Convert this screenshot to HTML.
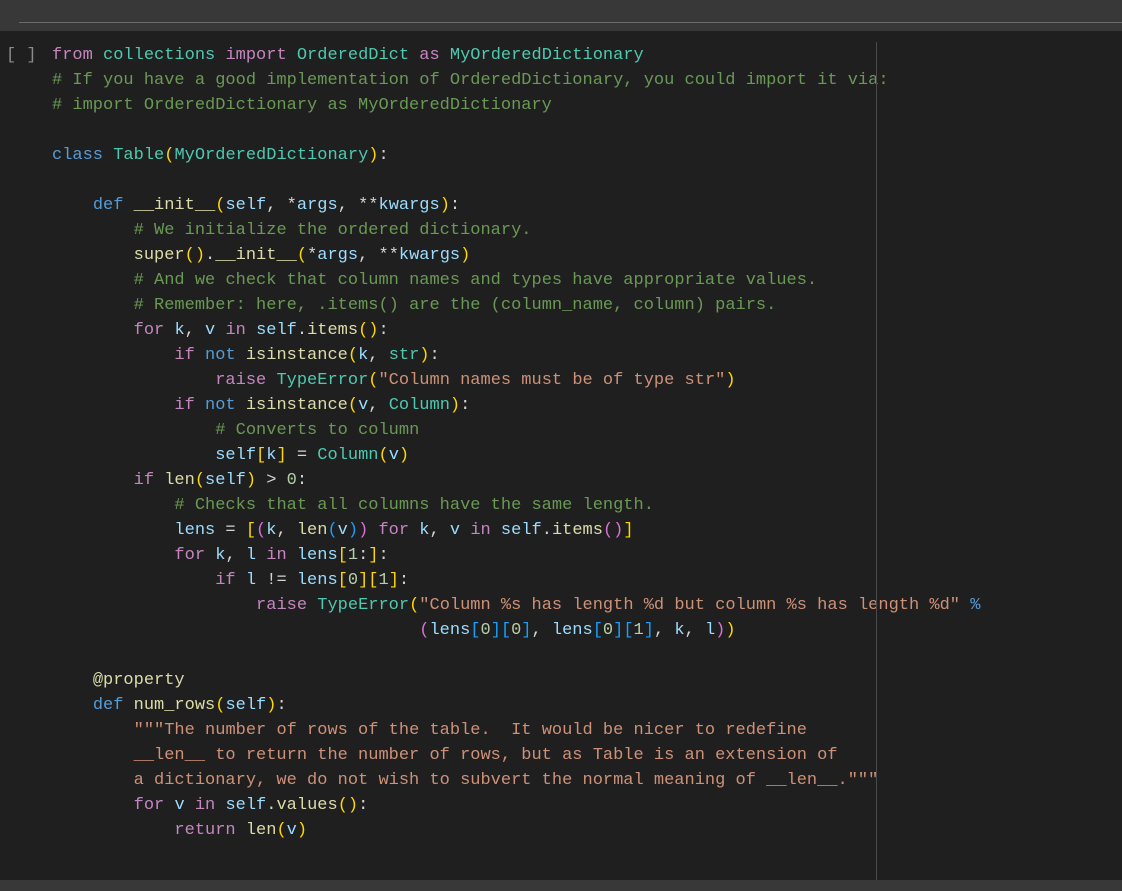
<!DOCTYPE html>
<html><head><meta charset="utf-8"><style>
body{margin:0;width:1122px;height:891px;background:#1f1f1f;overflow:hidden;position:relative;font-family:"Liberation Mono",monospace}
.top{position:absolute;left:0;top:0;width:1122px;height:31px;background:#383838}
.top i{position:absolute;left:19px;right:0;top:22px;height:1px;background:#6b6b6b}
.bot{position:absolute;left:0;bottom:0;width:1122px;height:11px;background:#383838}
.rule{position:absolute;left:876px;top:42px;width:1px;height:838px;background:#4a4a4a}
.br{position:absolute;left:6px;top:43px;color:#8b8b8b;font-size:17px;line-height:25px}
pre{position:absolute;left:52px;top:43px;margin:0;font-size:17px;line-height:25px;color:#d4d4d4;font-family:"Liberation Mono",monospace}
.k{color:#569cd6}.c{color:#c586c0}.f{color:#dcdcaa}.t{color:#4ec9b0}.s{color:#ce9178}.m{color:#6a9955}.v{color:#9cdcfe}.n{color:#b5cea8}.y{color:#ffd700}.p{color:#da70d6}.b{color:#179fff}
</style></head><body>
<div class="top"><i></i></div>
<div class="br">[ ]</div>
<pre><span class="c">from</span> <span class="t">collections</span> <span class="c">import</span> <span class="t">OrderedDict</span> <span class="c">as</span> <span class="t">MyOrderedDictionary</span>
<span class="m"># If you have a good implementation of OrderedDictionary, you could import it via:</span>
<span class="m"># import OrderedDictionary as MyOrderedDictionary</span>

<span class="k">class</span> <span class="t">Table</span><span class="y">(</span><span class="t">MyOrderedDictionary</span><span class="y">)</span>:

    <span class="k">def</span> <span class="f">__init__</span><span class="y">(</span><span class="v">self</span>, *<span class="v">args</span>, **<span class="v">kwargs</span><span class="y">)</span>:
        <span class="m"># We initialize the ordered dictionary.</span>
        <span class="f">super</span><span class="y">()</span>.<span class="f">__init__</span><span class="y">(</span>*<span class="v">args</span>, **<span class="v">kwargs</span><span class="y">)</span>
        <span class="m"># And we check that column names and types have appropriate values.</span>
        <span class="m"># Remember: here, .items() are the (column_name, column) pairs.</span>
        <span class="c">for</span> <span class="v">k</span>, <span class="v">v</span> <span class="c">in</span> <span class="v">self</span>.<span class="f">items</span><span class="y">()</span>:
            <span class="c">if</span> <span class="k">not</span> <span class="f">isinstance</span><span class="y">(</span><span class="v">k</span>, <span class="t">str</span><span class="y">)</span>:
                <span class="c">raise</span> <span class="t">TypeError</span><span class="y">(</span><span class="s">"Column names must be of type str"</span><span class="y">)</span>
            <span class="c">if</span> <span class="k">not</span> <span class="f">isinstance</span><span class="y">(</span><span class="v">v</span>, <span class="t">Column</span><span class="y">)</span>:
                <span class="m"># Converts to column</span>
                <span class="v">self</span><span class="y">[</span><span class="v">k</span><span class="y">]</span> = <span class="t">Column</span><span class="y">(</span><span class="v">v</span><span class="y">)</span>
        <span class="c">if</span> <span class="f">len</span><span class="y">(</span><span class="v">self</span><span class="y">)</span> &gt; <span class="n">0</span>:
            <span class="m"># Checks that all columns have the same length.</span>
            <span class="v">lens</span> = <span class="y">[</span><span class="p">(</span><span class="v">k</span>, <span class="f">len</span><span class="b">(</span><span class="v">v</span><span class="b">)</span><span class="p">)</span> <span class="c">for</span> <span class="v">k</span>, <span class="v">v</span> <span class="c">in</span> <span class="v">self</span>.<span class="f">items</span><span class="p">()</span><span class="y">]</span>
            <span class="c">for</span> <span class="v">k</span>, <span class="v">l</span> <span class="c">in</span> <span class="v">lens</span><span class="y">[</span><span class="n">1</span>:<span class="y">]</span>:
                <span class="c">if</span> <span class="v">l</span> != <span class="v">lens</span><span class="y">[</span><span class="n">0</span><span class="y">][</span><span class="n">1</span><span class="y">]</span>:
                    <span class="c">raise</span> <span class="t">TypeError</span><span class="y">(</span><span class="s">"Column %s has length %d but column %s has length %d"</span> <span class="k">%</span>
                                    <span class="p">(</span><span class="v">lens</span><span class="b">[</span><span class="n">0</span><span class="b">][</span><span class="n">0</span><span class="b">]</span>, <span class="v">lens</span><span class="b">[</span><span class="n">0</span><span class="b">][</span><span class="n">1</span><span class="b">]</span>, <span class="v">k</span>, <span class="v">l</span><span class="p">)</span><span class="y">)</span>

    <span class="f">@property</span>
    <span class="k">def</span> <span class="f">num_rows</span><span class="y">(</span><span class="v">self</span><span class="y">)</span>:
        <span class="s">"""The number of rows of the table.  It would be nicer to redefine</span>
<span class="s">        __len__ to return the number of rows, but as Table is an extension of</span>
<span class="s">        a dictionary, we do not wish to subvert the normal meaning of __len__."""</span>
        <span class="c">for</span> <span class="v">v</span> <span class="c">in</span> <span class="v">self</span>.<span class="f">values</span><span class="y">()</span>:
            <span class="c">return</span> <span class="f">len</span><span class="y">(</span><span class="v">v</span><span class="y">)</span></pre>
<div class="rule"></div>
<div class="bot"></div>
</body></html>
